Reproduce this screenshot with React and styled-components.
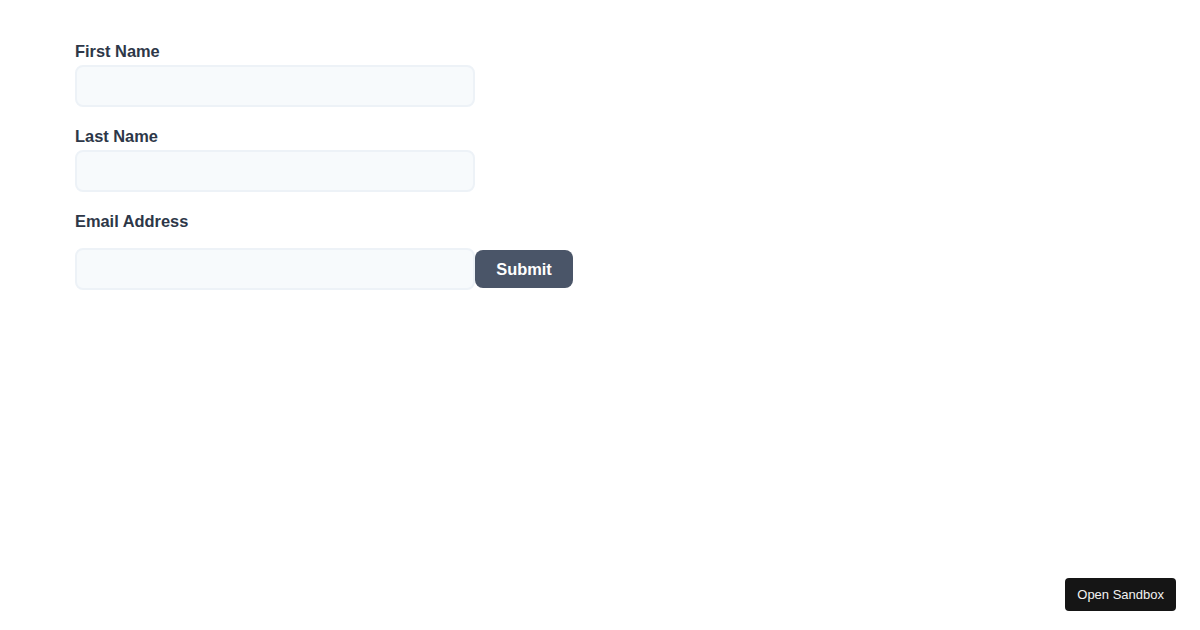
import React from 'react';
import styled, { createGlobalStyle } from 'styled-components';

const GlobalStyle = createGlobalStyle`
  body {
    margin: 0;
    background: #fff;
    font-family: "Liberation Sans", Arial, sans-serif;
  }
`;

const Page = styled.div`
  padding: 42px 75px;
`;

const Form = styled.form`
  display: flex;
  flex-direction: column;
  width: 498px;
`;

const Field = styled.div`
  display: flex;
  flex-direction: column;
  margin-bottom: 20px;
`;

const Label = styled.label`
  display: block;
  font-size: 16.4px;
  line-height: 19px;
  font-weight: 700;
  color: #2d3748;
  margin-bottom: ${props => (props.$spaced ? '17px' : '4px')};
`;

const Input = styled.input`
  box-sizing: border-box;
  width: 400px;
  height: 42px;
  padding: 0 12px;
  font-size: 16px;
  font-family: inherit;
  background: #f7fafc;
  border: 2px solid #edf2f7;
  border-radius: 8px;
  outline: none;
`;

const Row = styled.div`
  display: flex;
  align-items: center;
`;

const SubmitButton = styled.button`
  box-sizing: border-box;
  width: 98px;
  height: 38px;
  border: none;
  border-radius: 8px;
  background: #4a5568;
  color: #fff;
  font-family: inherit;
  font-size: 16.4px;
  font-weight: 700;
  cursor: pointer;
`;

const SandboxButton = styled.a`
  position: fixed;
  right: 24px;
  bottom: 19px;
  box-sizing: border-box;
  height: 33px;
  padding: 0 12px;
  display: flex;
  align-items: center;
  background: #151515;
  color: #f2f2f2;
  border-radius: 4px;
  font-family: "Liberation Sans", Arial, sans-serif;
  font-size: 13px;
  text-decoration: none;
`;

export default function App() {
  return (
    <>
      <GlobalStyle />
      <Page>
        <Form onSubmit={e => e.preventDefault()}>
          <Field>
            <Label htmlFor="first">First Name</Label>
            <Input id="first" type="text" />
          </Field>
          <Field>
            <Label htmlFor="last">Last Name</Label>
            <Input id="last" type="text" />
          </Field>
          <Field>
            <Label htmlFor="email" $spaced>Email Address</Label>
            <Row>
              <Input id="email" type="email" />
              <SubmitButton type="submit">Submit</SubmitButton>
            </Row>
          </Field>
        </Form>
      </Page>
      <SandboxButton href="#">Open Sandbox</SandboxButton>
    </>
  );
}
